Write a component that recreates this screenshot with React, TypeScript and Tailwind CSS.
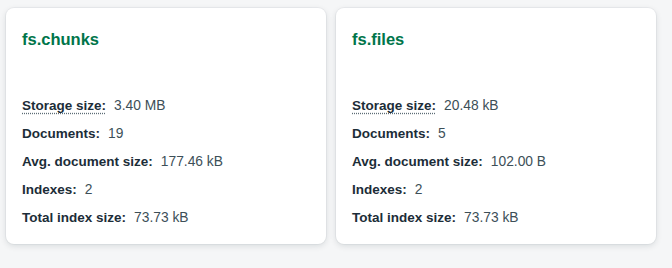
type Stat = { label: string; value: string; hint?: boolean };

type CollectionProps = {
  name: string;
  stats: Stat[];
};

const collections: CollectionProps[] = [
  {
    name: "fs.chunks",
    stats: [
      { label: "Storage size:", value: "3.40 MB", hint: true },
      { label: "Documents:", value: "19" },
      { label: "Avg. document size:", value: "177.46 kB" },
      { label: "Indexes:", value: "2" },
      { label: "Total index size:", value: "73.73 kB" },
    ],
  },
  {
    name: "fs.files",
    stats: [
      { label: "Storage size:", value: "20.48 kB", hint: true },
      { label: "Documents:", value: "5" },
      { label: "Avg. document size:", value: "102.00 B" },
      { label: "Indexes:", value: "2" },
      { label: "Total index size:", value: "73.73 kB" },
    ],
  },
];

const CollectionCard = ({ name, stats }: CollectionProps) => {
  return (
    <div className="w-[320px] h-[236px] bg-white rounded-lg shadow-[0_2px_6px_rgba(0,30,43,0.12),0_0_0_1px_rgba(0,30,43,0.04)] px-4 pt-[19px] flex flex-col">
      <h3 className="text-[16.5px] leading-6 font-bold text-[#00754A]">{name}</h3>

      <ul className="mt-[41px]">
        {stats.map((s) => (
          <li key={s.label} className="h-7 flex items-center gap-2 text-[13.5px]">
            <span
              className={
                "font-bold text-[#1C2D38] " +
                (s.hint ? "underline decoration-dotted decoration-[#5C6C75] underline-offset-[3px]" : "")
              }
            >
              {s.label}
            </span>
            <span className="text-[#3D4F58] text-[13.8px]">{s.value}</span>
          </li>
        ))}
      </ul>
    </div>
  );
};

export default function App() {
  return (
    <div
      className="w-[672px] h-[268px] bg-[#F5F6F7] pl-[6px] pt-2 flex gap-[10px]"
      style={{ fontFamily: '"Liberation Sans", Arial, sans-serif' }}
    >
      {collections.map((c) => (
        <CollectionCard key={c.name} {...c} />
      ))}
    </div>
  );
}
